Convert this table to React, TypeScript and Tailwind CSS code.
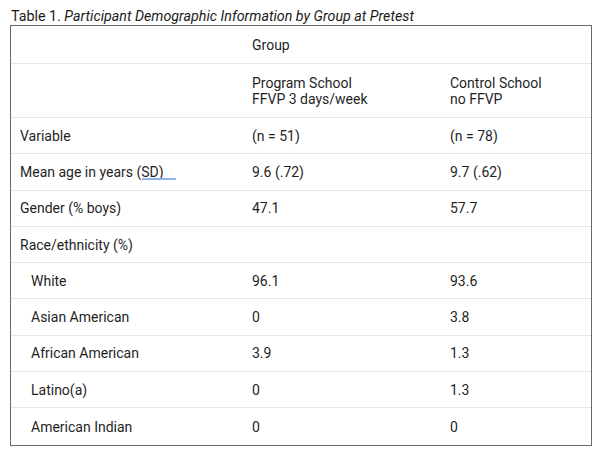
import React from "react";

type Row = { label: string; a: string; b: string; indent?: boolean; sd?: boolean };

const rows: Row[] = [
  { label: "Variable", a: "(n = 51)", b: "(n = 78)" },
  { label: "Mean age in years (SD)", a: "9.6 (.72)", b: "9.7 (.62)", sd: true },
  { label: "Gender (% boys)", a: "47.1", b: "57.7" },
  { label: "Race/ethnicity (%)", a: "", b: "" },
  { label: "White", a: "96.1", b: "93.6", indent: true },
  { label: "Asian American", a: "0", b: "3.8", indent: true },
  { label: "African American", a: "3.9", b: "1.3", indent: true },
  { label: "Latino(a)", a: "0", b: "1.3", indent: true },
  { label: "American Indian", a: "0", b: "0", indent: true },
];

export default function App() {
  return (
    <div
      className="w-[600px] h-[456px] bg-white text-[#1f1f1f] text-[14px] leading-[16px]"
      style={{ fontFamily: "Roboto, 'Noto Sans', sans-serif" }}
    >
      <div className="pl-[11px] pt-[8px] h-[25px] text-[14.25px] leading-[16px] text-[#1a1a1a]">
        Table 1. <span className="italic">Participant Demographic Information by Group at Pretest</span>
      </div>
      <div className="ml-[10px] w-[582px] border-[1.5px] border-[#6a6a6a]">
        <div className="grid grid-cols-[241px_198px_1fr] h-[38px] border-b border-[#e6e6e6] items-center">
          <div className="pl-[9px]"></div>
          <div>Group</div>
          <div></div>
        </div>
        <div className="grid grid-cols-[241px_198px_1fr] h-[54px] border-b border-[#e6e6e6] items-center">
          <div className="pl-[9px]"></div>
          <div>
            <div>Program School</div>
            <div>FFVP 3 days/week</div>
          </div>
          <div>
            <div>Control School</div>
            <div>no FFVP</div>
          </div>
        </div>
        {rows.map((r, i) => (
          <div
            key={r.label}
            className={
              "grid grid-cols-[241px_198px_1fr] h-[36.3px] items-center " +
              (i < rows.length - 1 ? "border-b border-[#e6e6e6]" : "")
            }
          >
            <div className={r.indent ? "pl-[20px] relative" : "pl-[9px] relative"}>
              {r.label}
              {r.sd && (
                <div className="absolute left-[131px] top-[14.5px] w-[34px] h-[1.5px] bg-[#8fb3ec]" />
              )}
            </div>
            <div>{r.a}</div>
            <div>{r.b}</div>
          </div>
        ))}
      </div>
    </div>
  );
}
